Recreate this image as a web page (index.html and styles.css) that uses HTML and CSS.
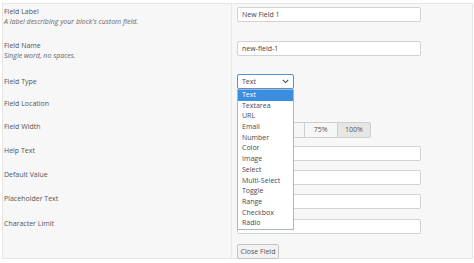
FILE: index.html
```html
<!DOCTYPE html>
<html lang="en">
<head>
    <meta charset="UTF-8">
    <title>Field Settings</title>
    <link rel="stylesheet" href="styles.css">
</head>
<body>
    <div class="panel">
        <div class="row r1">
            <div class="label">Field Label<span class="desc">A label describing your block's custom field.</span></div>
            <div class="control"><input class="text-input" type="text" value="New Field 1"></div>
        </div>
        <div class="row r2">
            <div class="label">Field Name<span class="desc">Single word, no spaces.</span></div>
            <div class="control"><input class="text-input" type="text" value="new-field-1"></div>
        </div>
        <div class="row r3">
            <div class="label">Field Type</div>
            <div class="control">
                <div class="select">
                    <span>Text</span>
                    <svg class="chevron" width="7" height="5" viewBox="0 0 7 5"><path d="M0.8 1 L3.5 3.6 L6.2 1" fill="none" stroke="#555" stroke-width="1.1"/></svg>
                </div>
                <ul class="dropdown">
                    <li class="active">Text</li>
                    <li>Textarea</li>
                    <li>URL</li>
                    <li>Email</li>
                    <li>Number</li>
                    <li>Color</li>
                    <li>Image</li>
                    <li>Select</li>
                    <li>Multi-Select</li>
                    <li>Toggle</li>
                    <li>Range</li>
                    <li>Checkbox</li>
                    <li>Radio</li>
                </ul>
            </div>
        </div>
        <div class="row r4">
            <div class="label">Field Location</div>
            <div class="control"></div>
        </div>
        <div class="row r5">
            <div class="label">Field Width</div>
            <div class="control">
                <!-- first two buttons sit under the open dropdown -->
                <div class="btn-group">
                    <span></span><span></span><span>75%</span><span class="on">100%</span>
                </div>
            </div>
        </div>
        <div class="row r6">
            <div class="label">Help Text</div>
            <div class="control"><input class="text-input" type="text"></div>
        </div>
        <div class="row r7">
            <div class="label">Default Value</div>
            <div class="control"><input class="text-input" type="text"></div>
        </div>
        <div class="row r8">
            <div class="label">Placeholder Text</div>
            <div class="control"><input class="text-input" type="text"></div>
        </div>
        <div class="row r9">
            <div class="label">Character Limit</div>
            <div class="control"><input class="text-input" type="text"></div>
        </div>
        <div class="row r10">
            <div class="label"></div>
            <div class="control"><button class="close-btn">Close Field</button></div>
        </div>
    </div>
</body>
</html>
```

FILE: styles.css
```css
body {
    margin: 0;
    background: #fff;
    font-family: "Open Sans", "Noto Sans", sans-serif;
    font-size: 7px;
    color: #444;
}
.panel {
    margin: 3px 1px 4px 2px;
    border: 1px solid #e6e6e6;
    background: #f7f7f7;
    height: 254px;
    position: relative;
}
.row {
    display: flex;
}
.label {
    width: 229px;
    flex-shrink: 0;
    border-right: 1px solid #e8e8e8;
    padding: 3px 0 0 1px;
    box-sizing: border-box;
    line-height: 10px;
    color: #555;
}
.desc {
    display: block;
    font-style: italic;
    color: #666;
}
.control {
    padding: 3px 0 0 5px;
    position: relative;
}
.r1 { height: 34px; }
.r2 { height: 33px; }
.r3 { height: 25px; }
.r3 .label { padding-top: 6px; }
.r4 { height: 23px; }
.r5 { height: 24px; }
.r6 { height: 24px; }
.r7 { height: 24px; }
.r8 { height: 25px; }
.r9 { height: 24px; }
.r10 { height: 18px; }
.r10 .control { padding-top: 4px; }
.text-input {
    display: block;
    width: 184px;
    height: 15px;
    margin: 0;
    padding: 0 4px;
    box-sizing: border-box;
    border: 1px solid #d2d2d2;
    border-radius: 2px;
    background: #fff;
    font-family: inherit;
    font-size: 7px;
    color: #444;
    outline: none;
}
.select {
    width: 57px;
    height: 15px;
    box-sizing: border-box;
    border: 1px solid #4f94d4;
    border-radius: 2px;
    background: #fff;
    display: flex;
    align-items: center;
    justify-content: space-between;
    padding: 0 4px 0 4px;
}
.dropdown {
    position: absolute;
    left: 5px;
    top: 18px;
    width: 57px;
    margin: 0;
    padding: 0;
    list-style: none;
    background: #fff;
    border: 1px solid #a9b7c4;
    box-sizing: border-box;
    z-index: 2;
}
.dropdown li {
    height: 10.7px;
    line-height: 10.7px;
    padding-left: 4px;
    color: #3c4b5a;
}
.dropdown li.active {
    background: #3b8de0;
    color: #fff;
}
.btn-group {
    display: flex;
    width: 134px;
    height: 16px;
}
.btn-group span {
    flex: 1;
    border: 1px solid #cfcfcf;
    margin-left: -1px;
    background: #f6f6f6;
    text-align: center;
    line-height: 14px;
    color: #555;
}
.btn-group span:first-child {
    margin-left: 0;
    border-radius: 2px 0 0 2px;
}
.btn-group span.on {
    background: #e6e6e6;
    border-radius: 0 2px 2px 0;
}
.close-btn {
    display: block;
    width: 42px;
    height: 15px;
    padding: 0;
    border: 1px solid #c3c3c3;
    border-radius: 2px;
    background: #f3f3f3;
    font-family: inherit;
    font-size: 7px;
    color: #555;
}
```
